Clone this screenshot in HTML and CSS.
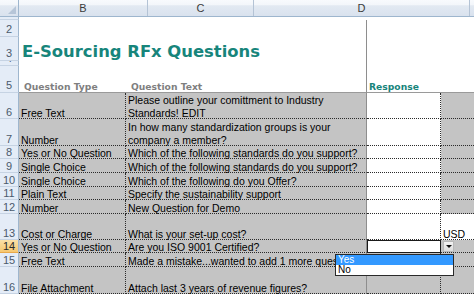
FILE: index.html
```html
<!DOCTYPE html>
<html>
<head>
<meta charset="utf-8">
<title>E-Sourcing RFx Questions</title>
<link rel="stylesheet" href="styles.css">
</head>
<body>
<div class="sheet">
  <div class="colhead">
    <div class="corner"><span class="tri"></span></div>
    <div class="ch">B</div>
    <div class="ch">C</div>
    <div class="ch">D</div>
    <div class="ch last"></div>
  </div>

  <div class="row h3"><div class="rh">1</div><div class="c"></div><div class="c"></div><div class="c"></div><div class="c"></div></div>
  <div class="row h17"><div class="rh">2</div><div class="c"></div><div class="c vs"></div><div class="c"></div><div class="c"></div></div>
  <div class="row h24"><div class="rh">3</div><div class="c title-cell"><span class="title">E-Sourcing RFx Questions</span></div><div class="c vs"></div><div class="c"></div><div class="c"></div></div>
  <div class="row h5"><div class="rh">4</div><div class="c"></div><div class="c vs"></div><div class="c"></div><div class="c"></div></div>
  <div class="row h27 headrow">
    <div class="rh">5</div>
    <div class="c hb"><span class="colt gray">Question Type</span></div>
    <div class="c hb vs"><span class="colt gray">Question Text</span></div>
    <div class="c hb"><span class="colt teal">Response</span></div>
    <div class="c hb"></div>
  </div>

  <div class="row h26">
    <div class="rh"><span class="n">6</span></div>
    <div class="c g vd bb"><span class="t">Free Text</span></div>
    <div class="c g vs bb"><span class="t">Please outline your comittment to Industry<br>Standards! EDIT</span></div>
    <div class="c w vd bb"></div>
    <div class="c g bb"></div>
  </div>
  <div class="row h27">
    <div class="rh"><span class="n">7</span></div>
    <div class="c g vd bb"><span class="t">Number</span></div>
    <div class="c g vs bb"><span class="t">In how many standardization groups is your<br>company a member?</span></div>
    <div class="c w vd bb"></div>
    <div class="c g bb"></div>
  </div>
  <div class="row h13">
    <div class="rh"><span class="n">8</span></div>
    <div class="c g vd bb"><span class="t">Yes or No Question</span></div>
    <div class="c g vs bb"><span class="t">Which of the following standards do you support?</span></div>
    <div class="c w vd bb"></div>
    <div class="c g bb"></div>
  </div>
  <div class="row h14">
    <div class="rh"><span class="n">9</span></div>
    <div class="c g vd bb"><span class="t">Single Choice</span></div>
    <div class="c g vs bb"><span class="t">Which of the following standards do you support?</span></div>
    <div class="c w vd bb"></div>
    <div class="c g bb"></div>
  </div>
  <div class="row h14">
    <div class="rh"><span class="n">10</span></div>
    <div class="c g vd bb"><span class="t">Single Choice</span></div>
    <div class="c g vs bb"><span class="t">Which of the following do you Offer?</span></div>
    <div class="c w vd bb"></div>
    <div class="c g bb"></div>
  </div>
  <div class="row h13">
    <div class="rh"><span class="n">11</span></div>
    <div class="c g vd bb"><span class="t">Plain Text</span></div>
    <div class="c g vs bb"><span class="t">Specify the sustainability support</span></div>
    <div class="c w vd bb"></div>
    <div class="c g bb"></div>
  </div>
  <div class="row h14">
    <div class="rh"><span class="n">12</span></div>
    <div class="c g vd bb"><span class="t">Number</span></div>
    <div class="c g vs bb"><span class="t">New Question for Demo</span></div>
    <div class="c w vd bb"></div>
    <div class="c g bb"></div>
  </div>
  <div class="row h26">
    <div class="rh"><span class="n">13</span></div>
    <div class="c g vd bb"><span class="t">Cost or Charge</span></div>
    <div class="c g vs bb"><span class="t">What is your set-up cost?</span></div>
    <div class="c w vd bb"></div>
    <div class="c w bb"><span class="t">USD</span></div>
  </div>
  <div class="row h13">
    <div class="rh sel"><span class="n">14</span></div>
    <div class="c g vd bb"><span class="t">Yes or No Question</span></div>
    <div class="c g vs bb"><span class="t">Are you ISO 9001 Certified?</span></div>
    <div class="c w active">
      <div class="dropdown">
        <div class="opt hi">Yes</div>
        <div class="opt">No</div>
      </div>
    </div>
    <div class="c g bb ddcell"><span class="ddbtn"><span class="arrow"></span></span></div>
  </div>
  <div class="row h14">
    <div class="rh"><span class="n">15</span></div>
    <div class="c g vd bb"><span class="t">Free Text</span></div>
    <div class="c g vs bb"><span class="t">Made a mistake...wanted to add 1 more question</span></div>
    <div class="c g vd bb"></div>
    <div class="c g bb"></div>
  </div>
  <div class="row h27">
    <div class="rh"><span class="n">16</span></div>
    <div class="c g vd bb"><span class="t">File Attachment</span></div>
    <div class="c g vs bb"><span class="t">Attach last 3 years of revenue figures?</span></div>
    <div class="c g vd bb"></div>
    <div class="c g bb"></div>
  </div>
</div>
</body>
</html>
```

FILE: styles.css
```css
* { box-sizing: border-box; }
html, body { margin: 0; padding: 0; }
body {
  width: 474px;
  height: 294px;
  overflow: hidden;
  background: #fff;
  font-family: "Liberation Sans", Arial, sans-serif;
  font-size: 10.5px;
  color: #000;
}
.sheet { width: 474px; }

.colhead {
  display: grid;
  grid-template-columns: 19px 129px 106px 216px 4px;
  height: 17px;
  background: linear-gradient(#f8fafd 0, #f3f6fa 30%, #e2e9f2 36%, #d9e2ee 100%);
  border-bottom: 1px solid #9eb6ce;
}
.ch {
  border-right: 1px solid #b4c3d5;
  display: flex;
  align-items: center;
  justify-content: center;
  font-size: 11px;
  color: #3b3b3b;
}
.ch.last { border-right: none; }
.corner {
  border-right: 1px solid #9eb6ce;
  display: flex;
  align-items: flex-end;
  justify-content: flex-end;
  padding: 0 2px 2px 0;
}
.tri {
  width: 0;
  height: 0;
  border-left: 8px solid transparent;
  border-bottom: 8px solid #b6c5d8;
}

.row {
  display: grid;
  grid-template-columns: 19px 107px 241px 74px 33px;
}
.h3 { height: 3px; }
.h5 { height: 5px; }
.h13 { height: 13px; }
.h14 { height: 14px; }
.h17 { height: 17px; }
.h24 { height: 24px; }
.h26 { height: 26px; }
.h27 { height: 27px; }

.rh {
  background: #e4ecf7;
  border-right: 1px solid #9eb6ce;
  border-bottom: 1px solid #c6d3e3;
  color: #4b5a6c;
  font-size: 11px;
  line-height: 13px;
  display: flex;
  align-items: flex-end;
  justify-content: center;
  overflow: hidden;
}
.rh .n { margin-bottom: -1px; }
.rh.sel {
  background: linear-gradient(#fbe0a8, #f6c76f);
  border-bottom-color: #e9a94a;
  color: #2a2a2a;
}

.c {
  display: flex;
  align-items: flex-end;
  padding: 0 2px;
  white-space: nowrap;
  min-width: 0;
}
.g { background: #c4c4c4; }
.w { background: #fff; }
.bb { border-bottom: 1px dotted #2b2b2b; }
.vd { border-right: 1px dotted #2b2b2b; }
.vs { border-right: 1px solid #8e8e8e; }
.hb { border-bottom: 1px solid #9a9a9a; }

.t {
  line-height: 13px;
  margin-bottom: -2px;
}

.title-cell { padding-left: 3px; }
.title {
  font-family: "DejaVu Sans", Verdana, sans-serif;
  font-weight: bold;
  font-size: 16.4px;
  line-height: 20px;
  color: #17857b;
  margin-bottom: -1px;
}
.colt {
  font-family: "DejaVu Sans", Verdana, sans-serif;
  font-weight: bold;
  font-size: 9.2px;
  line-height: 12px;
  margin-bottom: -1px;
  padding-left: 3px;
}
.gray { color: #7f7f7f; }
.teal { color: #17857b; padding-left: 0; }

.active {
  border: 1px solid #1a1a1a;
  position: relative;
  overflow: visible;
}
.dropdown {
  position: absolute;
  left: -33px;
  top: 13px;
  width: 119px;
  border: 1px solid #2a2a2a;
  background: #fff;
  z-index: 5;
  font-size: 10px;
}
.opt {
  height: 10px;
  line-height: 10px;
  padding-left: 2px;
}
.opt.hi { background: #3399ff; color: #fff; }

.ddcell {
  align-items: center;
  padding-left: 2px;
}
.ddbtn {
  width: 11px;
  height: 11px;
  background: linear-gradient(#f4f4f4, #dcdcdc);
  border: 1px solid #b8b8b8;
  display: flex;
  align-items: center;
  justify-content: center;
}
.arrow {
  width: 0;
  height: 0;
  border-left: 3px solid transparent;
  border-right: 3px solid transparent;
  border-top: 3px solid #111;
}
```
